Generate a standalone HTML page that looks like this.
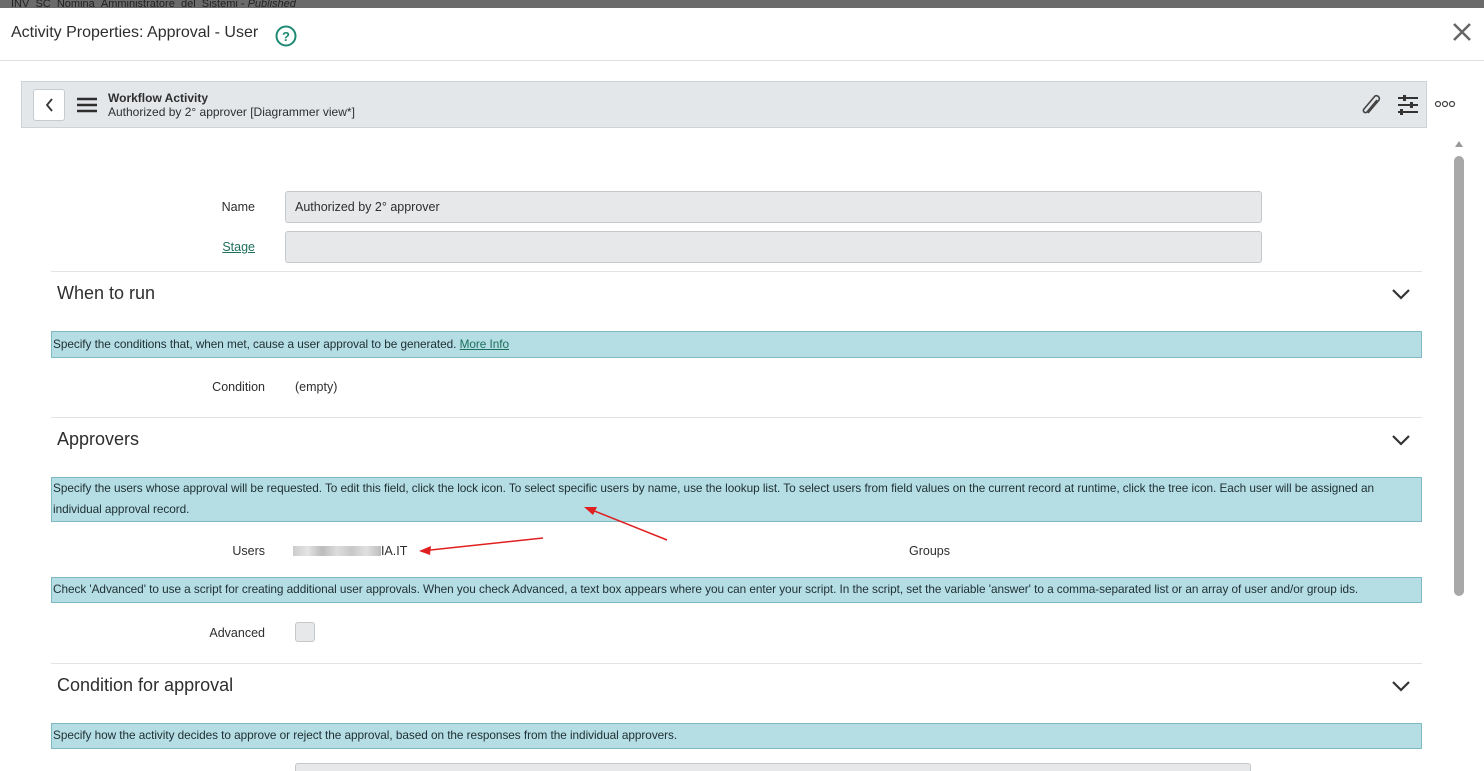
<!DOCTYPE html>
<html><head><style>
*{box-sizing:border-box;margin:0;padding:0}
html,body{width:1484px;height:771px;overflow:hidden}
body{background:#fff;font-family:"Liberation Sans",sans-serif;color:#2e2e2e;position:relative}
.abs{position:absolute}
.top{left:0;top:0;width:1484px;height:8px;background:#6b6b6b;overflow:hidden}
.title{left:11px;top:24px;font-size:16px;color:#2e2e2e}
.hline{left:0;top:60px;width:1484px;height:1px;background:#e0e0e0}
.tb{left:21px;top:81px;width:1406px;height:47px;background:#e4e7ea;border:1px solid #cfd3d6}
.back{left:11px;top:7px;width:32px;height:32px;background:#fff;border:1px solid #c8cbcd;border-radius:3px}
.lbl{font-size:12.5px;color:#2e2e2e;text-align:right}
.inp{background:#e6e8ea;border:1px solid #c5c8cb;border-radius:3px;font-size:12.5px;padding:8px 9px}
.sec{font-size:18px;color:#2e2e2e}
.sep{height:1px;background:#e3e3e3;left:51px;width:1371px}
.info{left:51px;width:1371px;background:#b4dde4;border:1px solid #7fb9c3;font-size:11.8px;letter-spacing:-0.05px;color:#1f2f33;padding:4px 1px;line-height:21px}
a{color:#1e6f5c}
</style></head><body>
<div class="abs top"><span style="font-size:11px;color:#222;position:relative;left:11px;top:-6px">INV_SC_Nomina_Amministratore_del_Sistemi - <i>Published</i></span></div>
<div class="abs title">Activity Properties: Approval - User</div>
<svg class="abs" style="left:275px;top:25px" width="22" height="22" viewBox="0 0 22 22"><circle cx="11" cy="11" r="9.5" fill="none" stroke="#1e8a73" stroke-width="2"/><text x="11" y="16" text-anchor="middle" font-size="13" font-weight="bold" fill="#1e8a73" font-family="Liberation Sans">?</text></svg>
<svg class="abs" style="left:1452px;top:22px" width="20" height="20" viewBox="0 0 20 20"><path d="M2 2L18 18M18 2L2 18" stroke="#666" stroke-width="2.5"/></svg>
<div class="abs hline"></div>
<div class="abs tb">
 <div class="abs back"><svg width="30" height="30" viewBox="0 0 30 30"><path d="M18 9l-5 6 5 6" fill="none" stroke="#333" stroke-width="1.8"/></svg></div>
 <svg class="abs" style="left:54px;top:14px" width="22" height="18"><path d="M1 3h20M1 9h20M1 15h20" stroke="#2e2e2e" stroke-width="2.6"/></svg>
 <div class="abs" style="left:86px;top:9px;font-size:12px;font-weight:bold;color:#2e2e2e">Workflow Activity</div>
 <div class="abs" style="left:86px;top:23px;font-size:12px;color:#2e2e2e">Authorized by 2° approver [Diagrammer view*]</div>
 <svg class="abs" style="left:1338px;top:11px" width="24" height="24" viewBox="0 0 24 24"><path d="M8 20L19 7a3 3 0 0 0-4-4L4 16a2 2 0 0 0 3 3l10-12" fill="none" stroke="#444" stroke-width="1.6"/></svg>
 <svg class="abs" style="left:1375px;top:12px" width="22" height="22"><path d="M1 4h20M1 11h20M1 18h20" stroke="#333" stroke-width="2"/><rect x="6" y="1" width="3" height="6" fill="#333"/><rect x="13" y="8" width="3" height="6" fill="#333"/><rect x="3" y="15" width="3" height="6" fill="#333"/></svg>
 <svg class="abs" style="left:1412px;top:18px" width="22" height="8"><circle cx="4" cy="4" r="2.5" fill="none" stroke="#444" stroke-width="1.2"/><circle cx="11" cy="4" r="2.5" fill="none" stroke="#444" stroke-width="1.2"/><circle cx="18" cy="4" r="2.5" fill="none" stroke="#444" stroke-width="1.2"/></svg>
</div>
<svg class="abs" style="left:1454px;top:140px" width="10" height="8"><path d="M1 7L5 1 9 7Z" fill="#999"/></svg>
<div class="abs" style="left:1454px;top:156px;width:10px;height:440px;background:#a8a8a8;border-radius:5px"></div>

<div class="abs lbl" style="left:150px;top:200px;width:105px">Name</div>
<div class="abs inp" style="left:285px;top:191px;width:977px;height:32px">Authorized by 2° approver</div>
<div class="abs lbl" style="left:150px;top:240px;width:105px"><a href="#">Stage</a></div>
<div class="abs inp" style="left:285px;top:231px;width:977px;height:32px"></div>

<div class="abs sep" style="top:271px"></div>
<div class="abs sec" style="left:57px;top:283px">When to run</div>
<svg class="abs" style="left:1391px;top:287px" width="20" height="14"><path d="M2 3l8 8 8-8" fill="none" stroke="#333" stroke-width="2.2"/></svg>
<div class="abs info" style="top:331px;height:27px;padding-top:2px">Specify the conditions that, when met, cause a user approval to be generated. <a href="#">More Info</a></div>
<div class="abs lbl" style="left:160px;top:380px;width:105px">Condition</div>
<div class="abs" style="left:295px;top:380px;font-size:12.5px">(empty)</div>

<div class="abs sep" style="top:417px"></div>
<div class="abs sec" style="left:57px;top:429px">Approvers</div>
<svg class="abs" style="left:1391px;top:433px" width="20" height="14"><path d="M2 3l8 8 8-8" fill="none" stroke="#333" stroke-width="2.2"/></svg>
<div class="abs info" style="top:477px;height:45px;padding-top:0">Specify the users whose approval will be requested. To edit this field, click the lock icon. To select specific users by name, use the lookup list. To select users from field values on the current record at runtime, click the tree icon. Each user will be assigned an individual approval record.</div>
<div class="abs lbl" style="left:160px;top:544px;width:105px">Users</div>
<div class="abs" style="left:293px;top:546px;width:88px;height:10px;background:linear-gradient(90deg,#ccc,#e4e4e4,#bbb,#ddd,#c8c8c8,#e0e0e0,#bdbdbd)"></div>
<div class="abs" style="left:381px;top:544px;font-size:12.5px">IA.IT</div>
<div class="abs lbl" style="left:850px;top:544px;width:100px">Groups</div>
<svg class="abs" style="left:415px;top:500px" width="260" height="60"><path d="M128 38L6 51" stroke="#e02020" stroke-width="1.5"/><path d="M4 51l12-5-1 9z" fill="#e02020"/><path d="M252 40L172 8" stroke="#e02020" stroke-width="1.5"/><path d="M169 7l13 0-4 8z" fill="#e02020"/></svg>
<div class="abs info" style="top:577px;height:26px;padding-top:1px;white-space:nowrap;overflow:hidden">Check 'Advanced' to use a script for creating additional user approvals. When you check Advanced, a text box appears where you can enter your script. In the script, set the variable 'answer' to a comma-separated list or an array of user and/or group ids.</div>
<div class="abs lbl" style="left:160px;top:626px;width:105px">Advanced</div>
<div class="abs" style="left:295px;top:622px;width:20px;height:20px;background:#e6e8ea;border:1px solid #c5c8cb;border-radius:3px"></div>

<div class="abs sep" style="top:663px"></div>
<div class="abs sec" style="left:57px;top:675px">Condition for approval</div>
<svg class="abs" style="left:1391px;top:679px" width="20" height="14"><path d="M2 3l8 8 8-8" fill="none" stroke="#333" stroke-width="2.2"/></svg>
<div class="abs info" style="top:723px;height:26px;padding-top:1px">Specify how the activity decides to approve or reject the approval, based on the responses from the individual approvers.</div>
<div class="abs" style="left:295px;top:763px;width:956px;height:8px;background:#e6e8ea;border:1px solid #c5c8cb;border-bottom:none;border-radius:3px 3px 0 0"></div>
</body></html>
